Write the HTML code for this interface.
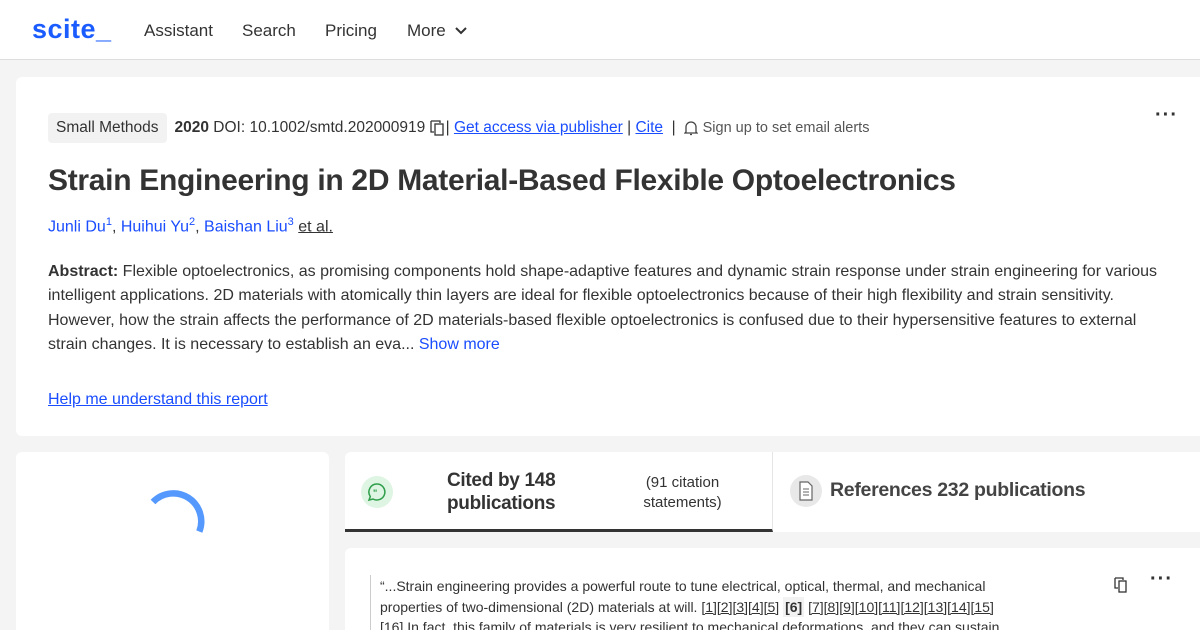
<!DOCTYPE html>
<html style="overflow:hidden;width:1200px;height:630px"><head><meta charset="utf-8"><style>
*{box-sizing:border-box;margin:0;padding:0}
body{width:1200px;height:630px;overflow:hidden;background:#f4f4f4;font-family:"Liberation Sans",sans-serif;color:#333;position:relative}
.hdr{position:absolute;left:0;top:0;width:1200px;height:60px;background:#fff;border-bottom:1px solid #ddd}
.logo{position:absolute;left:32px;top:14px;font-size:27px;font-weight:bold;color:#1a5cff;letter-spacing:0.5px}
.nav{position:absolute;top:21px;font-size:17px;color:#333}
.card{position:absolute;background:#fff;border-radius:6px}
a{color:#1a4dff;text-decoration:underline}
.meta{position:absolute;left:48px;top:113px;font-size:15.5px;display:flex;align-items:center;white-space:nowrap}
.tag{background:#f2f2f2;border-radius:4px;padding:6px 8px;color:#333;margin-right:8px}
h1{position:absolute;left:48px;top:164px;font-size:30px;font-weight:bold;color:#333;letter-spacing:-0.3px}
.auth{position:absolute;left:48px;top:216px;font-size:16px;color:#1a4dff}
.auth sup{font-size:11px}
.abs{position:absolute;left:48px;top:260px;width:1110px;font-size:16px;line-height:24.3px;color:#333}
</style></head><body>
<div class="hdr">
<div class="logo">scite_</div>
<div class="nav" style="left:144px">Assistant</div>
<div class="nav" style="left:242px">Search</div>
<div class="nav" style="left:325px">Pricing</div>
<div class="nav" style="left:407px">More <svg width="14" height="10" viewBox="0 0 14 10" style="margin-left:4px"><path d="M2 2l5 5 5-5" stroke="#333" stroke-width="2" fill="none"/></svg></div>
</div>
<div class="card" style="left:16px;top:77px;width:1200px;height:359px"></div>
<div class="meta"><span class="tag">Small Methods</span><b>2020</b>&nbsp;DOI: 10.1002/smtd.202000919&nbsp;
<svg width="16" height="16" viewBox="0 0 16 16"><path d="M1 1h9v2M1 1v11h3" stroke="#333" fill="none" stroke-width="1.3"/><rect x="5" y="4" width="8" height="11" stroke="#333" fill="none" stroke-width="1.3"/></svg>|&nbsp;<a>Get access via publisher</a>&nbsp;|&nbsp;<a>Cite</a>&nbsp;&nbsp;|&nbsp;&nbsp;<svg width="14" height="18" viewBox="0 0 14 18"><path d="M2 13V8a5 5 0 0 1 10 0v5l1 1H1z M6 15.5h2" stroke="#444" fill="none" stroke-width="1.3"/></svg>&nbsp;<span style="font-size:14.5px;color:#555">Sign up to set email alerts</span></div>
<div style="position:absolute;left:1155px;top:104px;font-size:20px;letter-spacing:1px;color:#333;font-weight:bold">···</div>
<h1>Strain Engineering in 2D Material-Based Flexible Optoelectronics</h1>
<div class="auth">Junli Du<sup>1</sup><span style="color:#333">, </span>Huihui Yu<sup>2</sup><span style="color:#333">, </span>Baishan Liu<sup>3</sup> <a style="color:#333">et al.</a></div>
<div class="abs"><b>Abstract:</b> Flexible optoelectronics, as promising components hold shape-adaptive features and dynamic strain response under strain engineering for various intelligent applications. 2D materials with atomically thin layers are ideal for flexible optoelectronics because of their high flexibility and strain sensitivity. However, how the strain affects the performance of 2D materials-based flexible optoelectronics is confused due to their hypersensitive features to external strain changes. It is necessary to establish an eva... <span style="color:#1a4dff">Show more</span></div>
<a style="position:absolute;left:48px;top:391px;font-size:16px">Help me understand this report</a>

<div class="card" style="left:16px;top:452px;width:313px;height:200px"></div>
<svg style="position:absolute;left:140px;top:488px" width="70" height="70" viewBox="0 0 70 70"><path d="M13 14A28 28 0 0 1 59.3 43.6" stroke="#5599ff" stroke-width="6.5" fill="none"/></svg>

<div class="card" style="left:345px;top:452px;width:860px;height:80px;border-radius:6px 6px 0 0"></div>
<div style="position:absolute;left:345px;top:452px;width:428px;height:80px;border-bottom:3px solid #333;border-right:1px solid #e5e5e5"></div>
<div style="position:absolute;left:361px;top:476px;width:32px;height:32px;border-radius:50%;background:#dff5e3"></div>
<svg style="position:absolute;left:367px;top:482px" width="20" height="20" viewBox="0 0 20 20"><path d="M10 2a8 8 0 1 1-4 15l-4 1 1.3-3.5A8 8 0 0 1 10 2z" stroke="#2e9e4a" stroke-width="1.5" fill="none"/><text x="6" y="14" font-size="9" fill="#2e9e4a" font-weight="bold" font-family="Liberation Sans">"</text></svg>
<div style="position:absolute;left:447px;top:469px;font-size:19px;font-weight:bold;line-height:23px;color:#333;letter-spacing:-0.3px">Cited by 148<br>publications</div>
<div style="position:absolute;left:625px;top:473px;width:115px;text-align:center;font-size:15px;line-height:20px;color:#333">(91 citation<br>statements)</div>
<div style="position:absolute;left:790px;top:475px;width:32px;height:32px;border-radius:50%;background:#e8e8e8"></div>
<svg style="position:absolute;left:798px;top:481px" width="16" height="20" viewBox="0 0 16 20"><path d="M2 1h8l4 4v14H2z" stroke="#666" fill="#fff" stroke-width="1.2"/><path d="M5 8h6M5 11h6M5 14h6" stroke="#666"/></svg>
<div style="position:absolute;left:830px;top:479px;font-size:19.5px;font-weight:bold;color:#444;letter-spacing:-0.3px">References 232 publications</div>

<div class="card" style="left:345px;top:548px;width:860px;height:100px"></div>
<div style="position:absolute;left:370px;top:575px;width:1px;height:60px;background:#ccc"></div>
<div style="position:absolute;left:380px;top:576px;width:640px;font-size:14px;line-height:20.5px;color:#333">“...Strain engineering provides a powerful route to tune electrical, optical, thermal, and mechanical properties of two-dimensional (2D) materials at will. <u>[1][2][3][4][5]</u> <b style="background:#f2f2f2;padding:2px">[6]</b> <u>[7][8][9][10][11][12][13][14][15]</u> [16] In fact, this family of materials is very resilient to mechanical deformations, and they can sustain</div>
<svg style="position:absolute;left:1114px;top:577px" width="16" height="16" viewBox="0 0 16 16"><path d="M1 1h8v2M1 1v10h3" stroke="#333" fill="none" stroke-width="1.3"/><rect x="5" y="4" width="7" height="11" stroke="#333" fill="none" stroke-width="1.3"/></svg>
<div style="position:absolute;left:1150px;top:568px;font-size:20px;letter-spacing:1px;color:#333;font-weight:bold">···</div>
</body></html>
